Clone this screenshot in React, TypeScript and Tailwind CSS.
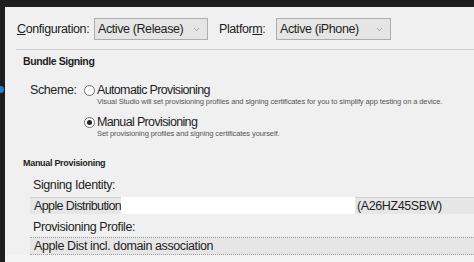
import { ChevronDown } from 'lucide-react'

const font = { fontFamily: '"Segoe UI", "Liberation Sans", sans-serif' }

function Select({ value, width }: { value: string; width: string }) {
  return (
    <div className={`${width} h-[22px] bg-[#e5e5e5] border border-[#adadad] flex items-center justify-between pl-[3px] pr-[6px]`}>
      <span className="text-[12.5px] tracking-[-0.4px] text-[#1e1e1e] leading-none">{value}</span>
      <ChevronDown className="w-[9px] h-[9px] text-[#707070]" strokeWidth={1.5} />
    </div>
  )
}

function Radio({ checked }: { checked?: boolean }) {
  return (
    <div className="w-[11px] h-[11px] rounded-full border border-[#6f6f6f] bg-white flex items-center justify-center shrink-0">
      {checked && <div className="w-[5px] h-[5px] rounded-full bg-[#222]" />}
    </div>
  )
}

export default function App() {
  return (
    <div className="w-[474px] h-[262px] overflow-hidden flex flex-col bg-[#1e1e1e] whitespace-nowrap" style={font}>
      <div className="h-[7px] shrink-0" />
      <div className="flex flex-1 min-h-0">
        <div className="w-[5px] shrink-0 relative">
          <div className="absolute left-[-3px] top-[79px] w-[7px] h-[7px] rounded-full bg-[#1e7fd8]" />
        </div>
        <div className="flex-1 bg-[#f0f0f0] text-[#1e1e1e] flex flex-col text-[12.5px] tracking-[-0.4px]">
          <div className="flex items-center pl-[12px] pt-[11px] h-[33px]">
            <span className="w-[77px]"><span className="underline">C</span>onfiguration:</span>
            <Select value="Active (Release)" width="w-[114px]" />
            <span className="ml-[11px] w-[57px]">Platfor<span className="underline">m</span>:</span>
            <Select value="Active (iPhone)" width="w-[115px]" />
          </div>
          <div className="ml-[11px] mt-[9px] border-t border-[#cfcfcf]" />
          <div className="pl-[18px] text-[10.5px] font-bold h-[24px] flex items-center">Bundle Signing</div>
          <div className="flex pl-[25px] pt-[9px]">
            <span className="w-[54px] leading-[14px]">Scheme:</span>
            <div className="flex flex-col">
              <div className="flex items-center gap-[2px] h-[14px]">
                <Radio />
                <span className="text-[12.5px] tracking-[-0.65px] leading-[14px]">Automatic Provisioning</span>
              </div>
              <div className="pl-[13px] text-[7.5px] tracking-[-0.1px] text-[#555] leading-[9px]">
                Visual Studio will set provisioning profiles and signing certificates for you to simplify app testing on a device.
              </div>
              <div className="flex items-center gap-[2px] h-[14px] mt-[9px]">
                <Radio checked />
                <span className="text-[12.5px] tracking-[-0.65px] leading-[14px]">Manual Provisioning</span>
              </div>
              <div className="pl-[13px] text-[7.5px] tracking-[-0.1px] text-[#555] leading-[9px]">
                Set provisioning profiles and signing certificates yourself.
              </div>
            </div>
          </div>
          <div className="pl-[18px] pt-[18px] text-[9px] tracking-[-0.3px] font-bold leading-[14px]">Manual Provisioning</div>
          <div className="pl-[28px] pt-[7px] leading-[16px]">Signing Identity:</div>
          <div className="ml-[25px] mt-[4px] flex h-[17px] leading-none">
            <div className="w-[91px] bg-[#e6e6e6] border-t border-[#d0d0d0] flex items-center pl-[4px] tracking-[-0.6px]">Apple Distribution</div>
            <div className="w-[234px] bg-white" />
            <div className="flex-1 bg-[#e6e6e6] border-t border-[#d0d0d0] flex items-center pl-[2px]">(A26HZ45SBW)</div>
          </div>
          <div className="pl-[28px] pt-[5px] leading-[16px]">Provisioning Profile:</div>
          <div className="ml-[25px] mt-[2px] h-[18px] bg-[#e6e6e6] border-y border-dotted border-[#a0a0a0] flex items-center pl-[4px] leading-none">
            Apple Dist incl. domain association
          </div>
          <div className="flex-1 bg-[#f4f4f4]" />
        </div>
      </div>
    </div>
  )
}
